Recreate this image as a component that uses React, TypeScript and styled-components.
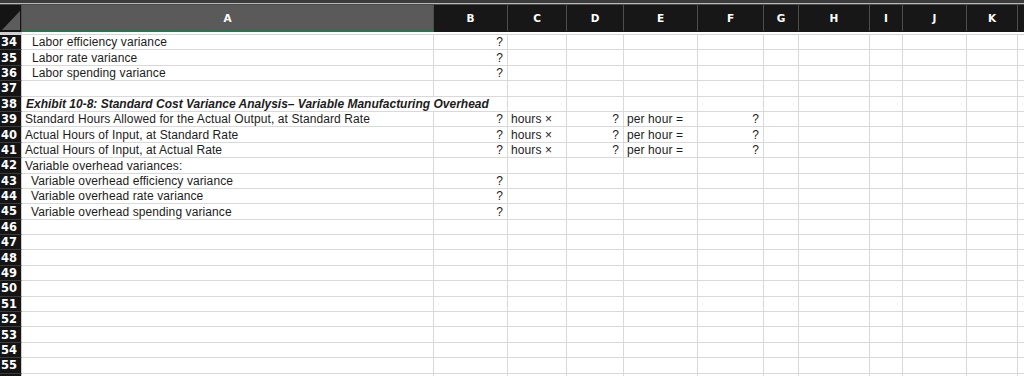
import React from "react";
import styled, { createGlobalStyle } from "styled-components";

const GlobalStyle = createGlobalStyle`
  html, body { margin: 0; padding: 0; background: #ffffff; }
  body { font-family: "Liberation Sans", Arial, sans-serif; }
`;

const COLS = [412, 74, 59, 57, 74, 66, 35, 71, 33, 64, 51, 80];
const LETTERS = ["A", "B", "C", "D", "E", "F", "G", "H", "I", "J", "K", "L"];
const TEMPLATE = `22px ${COLS.map((w) => `${w}px`).join(" ")}`;

const Sheet = styled.div`
  width: 1024px;
  height: 376px;
  overflow: hidden;
  background: #ffffff;
  display: flex;
  flex-direction: column;
`;

const TopStrip = styled.div`
  height: 3px;
  flex: none;
  background: #3b3b3b;
  border-bottom: 1px solid #b8b8b8;
`;

const HeaderRow = styled.div`
  display: grid;
  grid-template-columns: ${TEMPLATE};
  height: 27px;
  flex: none;
  background: #171717;
  border-top: 1px solid #4a4a4a;
`;

const Corner = styled.div`
  position: relative;
  background: #141414;
  border-right: 1px solid #4a4a4a;
`;

const CornerTriangle = styled.svg`
  position: absolute;
  left: 2px;
  bottom: 2px;
`;

const ColHead = styled.div<{ $selected?: boolean }>`
  display: flex;
  align-items: center;
  justify-content: center;
  box-sizing: border-box;
  background: ${(p) => (p.$selected ? "#5a5a5a" : "#171717")};
  border-right: 1px solid #4d4d4d;
  border-bottom: 2px solid ${(p) => (p.$selected ? "#1f7a47" : "#171717")};
  color: #ffffff;
  font-family: "DejaVu Sans", sans-serif;
  font-weight: bold;
  font-size: 10.5px;
  padding-top: 1px;
`;

const Spacer = styled.div`
  display: grid;
  grid-template-columns: ${TEMPLATE};
  height: 2px;
  flex: none;
`;

const SpacerHead = styled.div`
  background: #cfcfcf;
`;

const Body = styled.div`
  display: flex;
  flex-direction: column;
  border-top: 1px solid #d6d6d6;
`;

const Row = styled.div`
  display: grid;
  grid-template-columns: ${TEMPLATE};
  height: 15.4px;
  flex: none;
`;

const RowNum = styled.div`
  background: #141414;
  color: #ffffff;
  font-family: "DejaVu Sans", sans-serif;
  font-weight: bold;
  font-size: 11.5px;
  display: flex;
  align-items: center;
  padding-left: 1px;
  box-sizing: border-box;
  border-bottom: 1px solid #3a3a3a;
  border-right: 1px solid #cfcfcf;
  letter-spacing: 0.1px;
`;

const Cell = styled.div<{
  $align?: "left" | "right";
  $indent?: number;
  $span?: number;
  $bold?: boolean;
}>`
  grid-column: span ${(p) => p.$span ?? 1};
  box-sizing: border-box;
  border-right: 1px solid #d9d9d9;
  border-bottom: 1px solid #d9d9d9;
  display: flex;
  align-items: flex-end;
  justify-content: ${(p) => (p.$align === "right" ? "flex-end" : "flex-start")};
  padding-left: ${(p) => 3 + (p.$indent ?? 0)}px;
  padding-right: 4px;
  padding-bottom: 0px;
  font-size: 12px;
  line-height: 14px;
  color: #1c1c1c;
  white-space: nowrap;
  overflow: visible;
  letter-spacing: ${(p) => (p.$bold ? "0" : "0.1px")};
  font-weight: ${(p) => (p.$bold ? "bold" : "normal")};
  font-style: ${(p) => (p.$bold ? "italic" : "normal")};
`;

type CellData = {
  text: string;
  align?: "left" | "right";
  indent?: number;
  span?: number;
  bold?: boolean;
};

type RowData = { n: number; cells: Record<string, CellData> };

const q: CellData = { text: "?", align: "right" };

const ROWS: RowData[] = [
  { n: 34, cells: { A: { text: "Labor efficiency variance", indent: 7 }, B: q } },
  { n: 35, cells: { A: { text: "Labor rate variance", indent: 7 }, B: q } },
  { n: 36, cells: { A: { text: "Labor spending variance", indent: 7 }, B: q } },
  { n: 37, cells: {} },
  {
    n: 38,
    cells: {
      A: {
        text: "Exhibit 10-8: Standard Cost Variance Analysis\u2013 Variable Manufacturing Overhead",
        span: 2,
        bold: true,
        indent: 1,
      },
    },
  },
  {
    n: 39,
    cells: {
      A: { text: "Standard Hours Allowed for the Actual Output, at Standard Rate" },
      B: q,
      C: { text: "hours \u00d7" },
      D: q,
      E: { text: "per hour =" },
      F: q,
    },
  },
  {
    n: 40,
    cells: {
      A: { text: "Actual Hours of Input, at Standard Rate" },
      B: q,
      C: { text: "hours \u00d7" },
      D: q,
      E: { text: "per hour =" },
      F: q,
    },
  },
  {
    n: 41,
    cells: {
      A: { text: "Actual Hours of Input, at Actual Rate" },
      B: q,
      C: { text: "hours \u00d7" },
      D: q,
      E: { text: "per hour =" },
      F: q,
    },
  },
  { n: 42, cells: { A: { text: "Variable overhead variances:" } } },
  { n: 43, cells: { A: { text: "Variable overhead efficiency variance", indent: 6 }, B: q } },
  { n: 44, cells: { A: { text: "Variable overhead rate variance", indent: 6 }, B: q } },
  { n: 45, cells: { A: { text: "Variable overhead spending variance", indent: 6 }, B: q } },
];

for (let n = 46; n <= 57; n++) ROWS.push({ n, cells: {} });

function renderCells(cells: Record<string, CellData>) {
  const out: React.ReactNode[] = [];
  let i = 0;
  while (i < LETTERS.length) {
    const L = LETTERS[i];
    const c = cells[L];
    if (c) {
      out.push(
        <Cell key={L} $align={c.align} $indent={c.indent} $span={c.span} $bold={c.bold}>
          {c.text}
        </Cell>
      );
      i += c.span ?? 1;
    } else {
      out.push(<Cell key={L} />);
      i += 1;
    }
  }
  return out;
}

export default function App() {
  return (
    <>
      <GlobalStyle />
      <Sheet>
        <TopStrip />
        <HeaderRow>
          <Corner>
            <CornerTriangle width="18" height="19" viewBox="0 0 18 19">
              <polygon points="0,19 18,19 18,0" fill="#5c5c5c" />
            </CornerTriangle>
          </Corner>
          {LETTERS.map((L) => (
            <ColHead key={L} $selected={L === "A"}>
              {L === "L" ? "" : L}
            </ColHead>
          ))}
        </HeaderRow>
        <Spacer>
          <SpacerHead />
        </Spacer>
        <Body>
          {ROWS.map((r) => (
            <Row key={r.n}>
              <RowNum>{r.n}</RowNum>
              {renderCells(r.cells)}
            </Row>
          ))}
        </Body>
      </Sheet>
    </>
  );
}
